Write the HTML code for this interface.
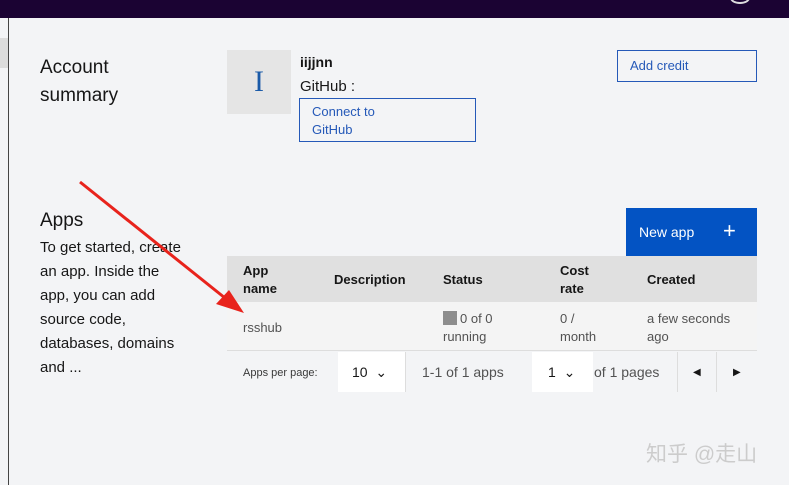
<!DOCTYPE html>
<html><head><meta charset="utf-8"><style>
*{margin:0;padding:0;box-sizing:border-box}
body{width:789px;height:485px;overflow:hidden;background:#f3f4f6;font-family:"Liberation Sans",sans-serif;position:relative;color:#161616}
.a{position:absolute}
.btn{position:absolute;border:1px solid #2559b8;color:#2559b8;font-size:13px;padding:0 12px}
.th{position:absolute;font-size:13px;font-weight:bold;line-height:18px;color:#161616}
.td{position:absolute;font-size:13px;line-height:18px;color:#525252}
</style></head><body>
<div class="a" style="left:0;top:0;width:789px;height:18px;background:#1b0333"></div>
<div class="a" style="left:730px;top:-8px;width:20px;height:12px;border:2px solid #ddd;border-radius:50%"></div>
<div class="a" style="left:8px;top:18px;width:1px;height:467px;background:#444"></div>
<div class="a" style="left:0;top:38px;width:8px;height:30px;background:#dcdcdc"></div>
<div class="a" style="left:40px;top:54px;font-size:19px;line-height:28px;color:#161616">Account<br>summary</div>
<div class="a" style="left:227px;top:50px;width:64px;height:64px;background:#e5e5e5;color:#1a5aa8;font-size:30px;font-family:'Liberation Serif',serif;text-align:center;line-height:64px">I</div>
<div class="a" style="left:300px;top:54px;font-size:14px;font-weight:bold">iijjnn</div>
<div class="a" style="left:300px;top:78px;font-size:15px">GitHub :</div>
<div class="btn" style="left:299px;top:98px;width:177px;height:44px;line-height:18px;padding-top:4px">Connect to<br>GitHub</div>
<div class="btn" style="left:617px;top:50px;width:140px;height:32px;line-height:30px">Add credit</div>
<div class="a" style="left:40px;top:210px;font-size:19px">Apps</div>
<div class="a" style="left:40px;top:236px;font-size:15px;line-height:24px;white-space:nowrap">To get started, create<br>an app. Inside the<br>app, you can add<br>source code,<br>databases, domains<br>and ...</div>
<div class="a" style="left:626px;top:208px;width:131px;height:48px;background:#0353c3;color:#fff;font-size:14px;line-height:48px;padding-left:13px">New app<span style="position:absolute;left:97px;top:-1px;font-size:22px">+</span></div>
<div class="a" style="left:227px;top:256px;width:530px;height:46px;background:#e0e0e0"></div>
<div class="th" style="left:243px;top:262px">App<br>name</div>
<div class="th" style="left:334px;top:271px">Description</div>
<div class="th" style="left:443px;top:271px">Status</div>
<div class="th" style="left:560px;top:262px">Cost<br>rate</div>
<div class="th" style="left:647px;top:271px">Created</div>
<div class="a" style="left:227px;top:302px;width:530px;height:49px;background:#f4f4f4;border-bottom:1px solid #ddd"></div>
<div class="td" style="left:243px;top:319px">rsshub</div>
<div class="td" style="left:443px;top:310px"><span style="display:inline-block;width:14px;height:14px;background:#8d8d8d;vertical-align:-2px;margin-right:3px"></span>0 of 0<br>running</div>
<div class="td" style="left:560px;top:310px">0 /<br>month</div>
<div class="td" style="left:647px;top:310px">a few seconds<br>ago</div>
<div class="a" style="left:338px;top:352px;width:67px;height:40px;background:#fff"></div>
<div class="a" style="left:532px;top:352px;width:61px;height:40px;background:#fff"></div>
<div class="a" style="left:405px;top:352px;width:1px;height:40px;background:#ddd"></div>
<div class="a" style="left:677px;top:352px;width:1px;height:40px;background:#ddd"></div>
<div class="a" style="left:716px;top:352px;width:1px;height:40px;background:#ddd"></div>
<div class="td" style="left:243px;top:364px;font-size:11px;color:#393939">Apps per page:</div>
<div class="td" style="left:352px;top:363px;font-size:14px;color:#161616">10 &nbsp;⌄</div>
<div class="td" style="left:422px;top:363px;font-size:14px">1-1 of 1 apps</div>
<div class="td" style="left:548px;top:363px;font-size:14px;color:#161616">1 &nbsp;⌄</div>
<div class="td" style="left:594px;top:363px;font-size:14px">of 1 pages</div>
<div class="td" style="left:693px;top:364px;font-size:10px;color:#161616">◀</div>
<div class="td" style="left:733px;top:364px;font-size:10px;color:#161616">▶</div>
<svg class="a" style="left:0;top:0" width="789" height="485"><line x1="80" y1="182" x2="230" y2="302" stroke="#e8231c" stroke-width="3"/><polygon points="244,313 216,304 229,290" fill="#e8231c"/></svg>
<div class="a" style="left:646px;top:438px;font-size:21px;color:#cccccc;font-family:'Liberation Sans','Noto Sans CJK SC',sans-serif">知乎 @走山</div>
</body></html>
